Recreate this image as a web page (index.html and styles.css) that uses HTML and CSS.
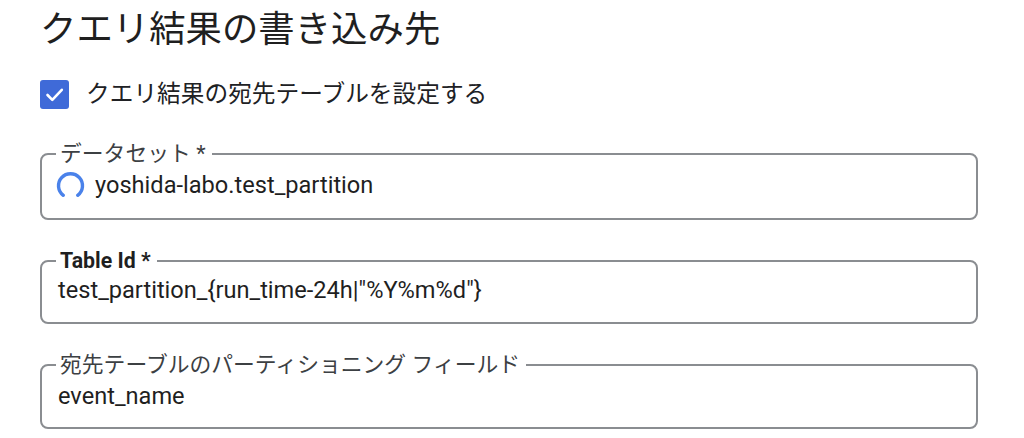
FILE: index.html
```html
<!DOCTYPE html>
<html lang="ja">
<head>
<meta charset="utf-8">
<title>クエリ結果の書き込み先</title>
<link rel="stylesheet" href="styles.css">
</head>
<body>
<main class="page">
  <h1 class="title">クエリ結果の書き込み先</h1>

  <label class="check-row">
    <span class="checkbox">
      <svg viewBox="0 0 29 29" width="29" height="29" aria-hidden="true">
        <path d="M7.5 15 L12.3 19.8 L21.8 9.8" fill="none" stroke="#fff" stroke-width="2.6" stroke-linecap="round" stroke-linejoin="round"/>
      </svg>
    </span>
    <span class="check-label">クエリ結果の宛先テーブルを設定する</span>
  </label>

  <fieldset class="field field-dataset">
    <legend class="field-label">データセット *</legend>
    <div class="field-row">
      <span class="spinner">
        <svg viewBox="0 0 29 29" width="29" height="29" aria-hidden="true">
          <path d="M7.3 24.3 A12 12 0 1 1 21.7 24.3" fill="none" stroke="#4a82ea" stroke-width="3.4" stroke-linecap="round"/>
        </svg>
      </span>
      <span class="field-value">yoshida-labo.test_partition</span>
    </div>
  </fieldset>

  <fieldset class="field">
    <legend class="field-label strong">Table Id *</legend>
    <div class="field-row">
      <span class="field-value">test_partition_{run_time-24h|"%Y%m%d"}</span>
    </div>
  </fieldset>

  <fieldset class="field field-last">
    <legend class="field-label">宛先テーブルのパーティショニング フィールド</legend>
    <div class="field-row">
      <span class="field-value">event_name</span>
    </div>
  </fieldset>
</main>
</body>
</html>
```

FILE: styles.css
```css
html, body {
  margin: 0;
  padding: 0;
  background: #ffffff;
}

body {
  font-family: Roboto, "Noto Sans CJK JP", "Noto Sans", sans-serif;
  color: #1f1f1f;
}

.page {
  padding: 6px 46px 0 40px;
}

.title {
  margin: 0;
  font-size: 36.4px;
  line-height: 48px;
  font-weight: 400;
  color: #1f1f1f;
}

.check-row {
  display: flex;
  align-items: center;
  gap: 17px;
  height: 40px;
  margin-top: 20px;
}

.checkbox {
  width: 29px;
  height: 29px;
  border-radius: 3px;
  background: #3f6ad8;
  display: flex;
  flex: none;
}

.check-label {
  font-size: 23.7px;
  line-height: 32px;
  color: #202124;
}

.field {
  margin: 28px 0 0;
  min-width: 0;
  padding: 3px 16px 18px;
  border: 2px solid #8a8d91;
  border-radius: 8px;
}

.field-dataset {
  padding-bottom: 17px;
}

.field + .field {
  margin-top: 29px;
}

.field-last {
  padding-top: 5px;
  padding-bottom: 17px;
}

.field-label {
  margin-left: -2px;
  padding: 0 6px 0 4px;
  font-size: 21.8px;
  line-height: 24px;
  color: #3c4043;
}

.field-label.strong {
  font-weight: 700;
  font-size: 21.3px;
  color: #1f1f1f;
}

.field-row {
  display: flex;
  align-items: center;
  gap: 10px;
  min-height: 28px;
}

.field-value {
  font-size: 23.6px;
  line-height: 28px;
  color: #1f1f1f;
  white-space: nowrap;
}

.spinner {
  display: flex;
  width: 29px;
  height: 29px;
  margin: 2px 0 1px -2px;
  flex: none;
}
```
